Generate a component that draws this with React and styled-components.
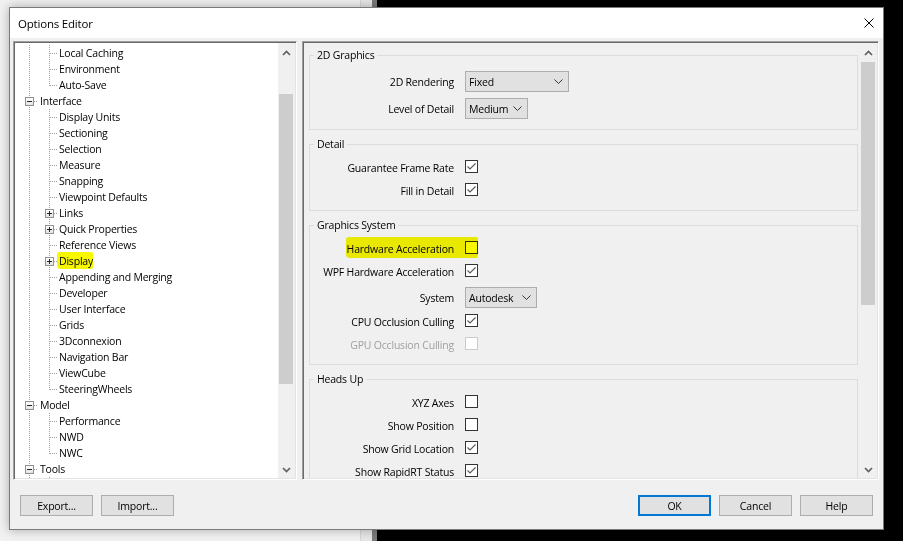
import React from 'react'
import styled, { createGlobalStyle } from 'styled-components'

const GlobalStyle = createGlobalStyle`
  html, body { margin: 0; padding: 0; }
  body {
    width: 903px;
    height: 541px;
    overflow: hidden;
    font-family: "Open Sans", "Noto Sans", sans-serif;
    font-size: 10.5px;
    letter-spacing: -0.2px;
    color: #000;
    background: linear-gradient(to right, #f1f1f1 0 360px, #d6d6d6 360px 361px, #e6e6e6 361px 372px, #7b7b7b 372px 377px, #000 377px);
  }
`

const Desktop = styled.div`
  width: 903px;
  height: 541px;
  box-sizing: border-box;
  padding: 7px 0 0 9px;
`

const Window = styled.div`
  width: 875px;
  height: 523px;
  box-sizing: border-box;
  border: 1px solid #7a7a7a;
  background: #f0f0f0;
  box-shadow: 0 0 10px rgba(0, 0, 0, 0.3);
  display: flex;
  flex-direction: column;
`

const TitleBar = styled.div`
  height: 30px;
  flex: none;
  background: #fff;
  display: flex;
  align-items: center;
  justify-content: space-between;
  padding: 0 9px 0 8px;
  font-size: 11.5px;
`

const Body = styled.div`
  height: 442px;
  flex: none;
  box-sizing: border-box;
  display: flex;
  gap: 5px;
  padding: 3px 4px 0 3px;
`

const Sunken = styled.div`
  box-sizing: border-box;
  height: 439px;
  border-style: solid;
  border-width: 1px;
  border-color: #a0a0a0 #fff #fff #a0a0a0;
  padding: 1px;
  box-shadow: inset 1px 1px 0 #696969, inset -1px -1px 0 #e3e3e3;
  display: flex;
  overflow: hidden;
`

const TreePanel = styled(Sunken)`
  width: 284px;
  background: #fff;
`

const OptionsPanel = styled(Sunken)`
  width: 577px;
  background: #f0f0f0;
`

const TreeList = styled.div`
  flex: 1;
  padding: 2px 0 0 5px;
  overflow: hidden;
`

const TreeRow = styled.div`
  display: flex;
  align-items: center;
  height: 16px;
  white-space: nowrap;
`

const dots = (dir) => `repeating-linear-gradient(${dir}, #a0a0a0 0 1px, transparent 1px 2px)`

const Guide = styled.span`
  position: relative;
  flex: none;
  width: ${(p) => p.w}px;
  height: 16px;

  &::before {
    content: '';
    position: absolute;
    left: 9px;
    top: 0;
    width: 1px;
    height: ${(p) => (p.v === 'half' ? 9 : p.v === 'full' ? 16 : 0)}px;
    background: ${dots('to bottom')};
  }

  &::after {
    content: '';
    position: absolute;
    left: 10px;
    top: 8px;
    height: 1px;
    width: ${(p) => (p.h ? p.w - 12 : 0)}px;
    background: ${dots('to right')};
  }
`

const Expander = styled.span`
  position: absolute;
  left: 5px;
  top: 4px;
  width: 9px;
  height: 9px;
  box-sizing: border-box;
  border: 1px solid #919191;
  background: linear-gradient(to bottom, #fff, #e4e4e4);
  z-index: 1;

  &::before {
    content: '';
    position: absolute;
    left: 1px;
    top: 3px;
    width: 5px;
    height: 1px;
    background: #222;
  }

  &::after {
    content: '';
    position: absolute;
    left: 3px;
    top: 1px;
    width: 1px;
    height: ${(p) => (p.plus ? 5 : 0)}px;
    background: #222;
  }
`

const Marked = styled.span`
  position: relative;

  &::after {
    content: '';
    position: absolute;
    left: ${(p) => p.l}px;
    right: ${(p) => p.r}px;
    top: ${(p) => p.t}px;
    bottom: ${(p) => p.b}px;
    background: #f7f700;
    mix-blend-mode: multiply;
    border-radius: 3px 2px 2px 4px;
  }
`

const TreeLabel = styled.span`
  line-height: 16px;
`

const ScrollBar = styled.div`
  width: 17px;
  flex: none;
  background: #f0f0f0;
  display: flex;
  flex-direction: column;
`

const ScrollArrow = styled.div`
  height: 17px;
  flex: none;
  display: flex;
  align-items: center;
  justify-content: center;
  padding-top: ${(p) => (p.up ? 2 : 0)}px;
  box-sizing: border-box;
`

const Thumb = styled.div`
  margin: 0 2px 0 1px;
  background: #cdcdcd;
  flex: none;
`

const Chevron = ({ up }) => (
  <svg width="9" height="6" viewBox="0 0 9 6">
    <polyline
      points={up ? '1,5 4.5,1.5 8,5' : '1,1 4.5,4.5 8,1'}
      fill="none"
      stroke="#606060"
      strokeWidth="1.7"
    />
  </svg>
)

const Scroller = ({ offset, size }) => (
  <ScrollBar>
    <ScrollArrow up>
      <Chevron up />
    </ScrollArrow>
    <div style={{ flex: 1 }}>
      <Thumb style={{ marginTop: offset, height: size }} />
    </div>
    <ScrollArrow>
      <Chevron />
    </ScrollArrow>
  </ScrollBar>
)

const OptionsContent = styled.div`
  flex: 1;
  padding: 4px 2px 0 5px;
  overflow: hidden;
`

const Group = styled.fieldset`
  margin: ${(p) => (p.first ? 0 : 6)}px 0 0 0;
  padding: 3px 0 9px 0;
  border: 1px solid #dcdcdc;
  min-width: 0;
`

const Legend = styled.legend`
  margin-left: 4px;
  padding: 0 3px;
  line-height: 16px;
`

const Row = styled.div`
  display: grid;
  grid-template-columns: 144px auto;
  column-gap: 11px;
  align-items: center;
  justify-items: start;
  height: ${(p) => (p.select ? 21 : 13)}px;
  padding-top: 5px;
  padding-bottom: ${(p) => (p.select ? 1 : 5)}px;
`

const Label = styled.span`
  justify-self: end;
  white-space: nowrap;
  line-height: 13px;
  position: relative;
  top: ${(p) => (p.select ? 1 : 2)}px;
  color: ${(p) => (p.disabled ? '#a0a0a0' : '#000')};
`

const Box = styled.span`
  width: 13px;
  height: 13px;
  box-sizing: border-box;
  border: 1px solid ${(p) => (p.disabled ? '#cccccc' : '#333333')};
  background: #fff;
  display: flex;
  align-items: center;
  justify-content: center;
`

const Check = ({ checked, disabled }) => (
  <Box disabled={disabled}>
    {checked && (
      <svg width="11" height="11" viewBox="0 0 11 11">
        <polyline points="1.5,5.5 4,8 9.5,2.5" fill="none" stroke="#5c5c5c" strokeWidth="1.2" />
      </svg>
    )}
  </Box>
)

const Combo = styled.div`
  width: ${(p) => p.w}px;
  height: 21px;
  box-sizing: border-box;
  border: 1px solid #adadad;
  background: #e1e1e1;
  display: flex;
  align-items: center;
  justify-content: space-between;
  padding: 0 5px 0 3px;
`

const Select = ({ value, w }) => (
  <Combo w={w}>
    <span>{value}</span>
    <svg width="9" height="5" viewBox="0 0 9 5">
      <polyline points="0.5,0.5 4.5,4.5 8.5,0.5" fill="none" stroke="#333" strokeWidth="1" />
    </svg>
  </Combo>
)

const Footer = styled.div`
  flex: 1;
  display: flex;
  align-items: flex-start;
  gap: 8px;
  padding: 15px 10px 0 10px;
`

const Spacer = styled.div`
  flex: 1;
`

const Button = styled.button`
  width: 73px;
  height: 21px;
  box-sizing: border-box;
  margin: 0;
  padding: 0;
  font: inherit;
  letter-spacing: inherit;
  color: #000;
  background: #e1e1e1;
  border: ${(p) => (p.primary ? '2px solid #0078d7' : '1px solid #adadad')};
`

const tree = [
  ['Local Caching', 1],
  ['Environment', 1],
  ['Auto-Save', 1, { last: true }],
  ['Interface', 0, { exp: '-' }],
  ['Display Units', 1],
  ['Sectioning', 1],
  ['Selection', 1],
  ['Measure', 1],
  ['Snapping', 1],
  ['Viewpoint Defaults', 1],
  ['Links', 1, { exp: '+' }],
  ['Quick Properties', 1, { exp: '+' }],
  ['Reference Views', 1],
  ['Display', 1, { exp: '+', mark: true }],
  ['Appending and Merging', 1],
  ['Developer', 1],
  ['User Interface', 1],
  ['Grids', 1],
  ['3Dconnexion', 1],
  ['Navigation Bar', 1],
  ['ViewCube', 1],
  ['SteeringWheels', 1, { last: true }],
  ['Model', 0, { exp: '-' }],
  ['Performance', 1],
  ['NWD', 1],
  ['NWC', 1, { last: true }],
  ['Tools', 0, { exp: '-' }],
  ['', 1],
]

const TreeItem = ({ label, level, opts = {} }) => {
  const expander = opts.exp ? <Expander plus={opts.exp === '+'} /> : null
  const text = opts.mark ? (
    <Marked l={-2} r={0} t={-1} b={0}>
      <TreeLabel>{label}</TreeLabel>
    </Marked>
  ) : (
    <TreeLabel>{label}</TreeLabel>
  )
  return (
    <TreeRow>
      <Guide w={20} v="full" h={level === 0}>
        {level === 0 && expander}
      </Guide>
      {level === 1 && (
        <Guide w={19} v={opts.last ? 'half' : 'full'} h>
          {expander}
        </Guide>
      )}
      {text}
    </TreeRow>
  )
}

const CheckRow = ({ label, checked, disabled, mark }) => (
  <Row>
    <Label disabled={disabled}>
      {mark ? (
        <Marked l={-1} r={-24} t={-5} b={-2}>
          {label}
        </Marked>
      ) : (
        label
      )}
    </Label>
    <Check checked={checked} disabled={disabled} />
  </Row>
)

const SelectRow = ({ label, value, w }) => (
  <Row select>
    <Label select>{label}</Label>
    <Select value={value} w={w} />
  </Row>
)

const CloseIcon = () => (
  <svg width="10" height="10" viewBox="0 0 10 10">
    <path d="M0.5 0.5 L9.5 9.5 M9.5 0.5 L0.5 9.5" stroke="#000" strokeWidth="1" fill="none" />
  </svg>
)

export default function App() {
  return (
    <Desktop>
      <GlobalStyle />
      <Window>
        <TitleBar>
          <span>Options Editor</span>
          <CloseIcon />
        </TitleBar>
        <Body>
          <TreePanel>
            <TreeList>
              {tree.map(([label, level, opts], i) => (
                <TreeItem key={i} label={label} level={level} opts={opts} />
              ))}
            </TreeList>
            <Scroller offset={34} size={290} />
          </TreePanel>
          <OptionsPanel>
            <OptionsContent>
              <Group first>
                <Legend>2D Graphics</Legend>
                <SelectRow label="2D Rendering" value="Fixed" w={104} />
                <SelectRow label="Level of Detail" value="Medium" w={63} />
              </Group>
              <Group>
                <Legend>Detail</Legend>
                <CheckRow label="Guarantee Frame Rate" checked />
                <CheckRow label="Fill in Detail" checked />
              </Group>
              <Group>
                <Legend>Graphics System</Legend>
                <CheckRow label="Hardware Acceleration" mark />
                <CheckRow label="WPF Hardware Acceleration" checked />
                <SelectRow label="System" value="Autodesk" w={72} />
                <CheckRow label="CPU Occlusion Culling" checked />
                <CheckRow label="GPU Occlusion Culling" disabled />
              </Group>
              <Group>
                <Legend>Heads Up</Legend>
                <CheckRow label="XYZ Axes" />
                <CheckRow label="Show Position" />
                <CheckRow label="Show Grid Location" checked />
                <CheckRow label="Show RapidRT Status" checked />
              </Group>
            </OptionsContent>
            <Scroller offset={2} size={243} />
          </OptionsPanel>
        </Body>
        <Footer>
          <Button>Export...</Button>
          <Button>Import...</Button>
          <Spacer />
          <Button primary>OK</Button>
          <Button>Cancel</Button>
          <Button>Help</Button>
        </Footer>
      </Window>
    </Desktop>
  )
}
